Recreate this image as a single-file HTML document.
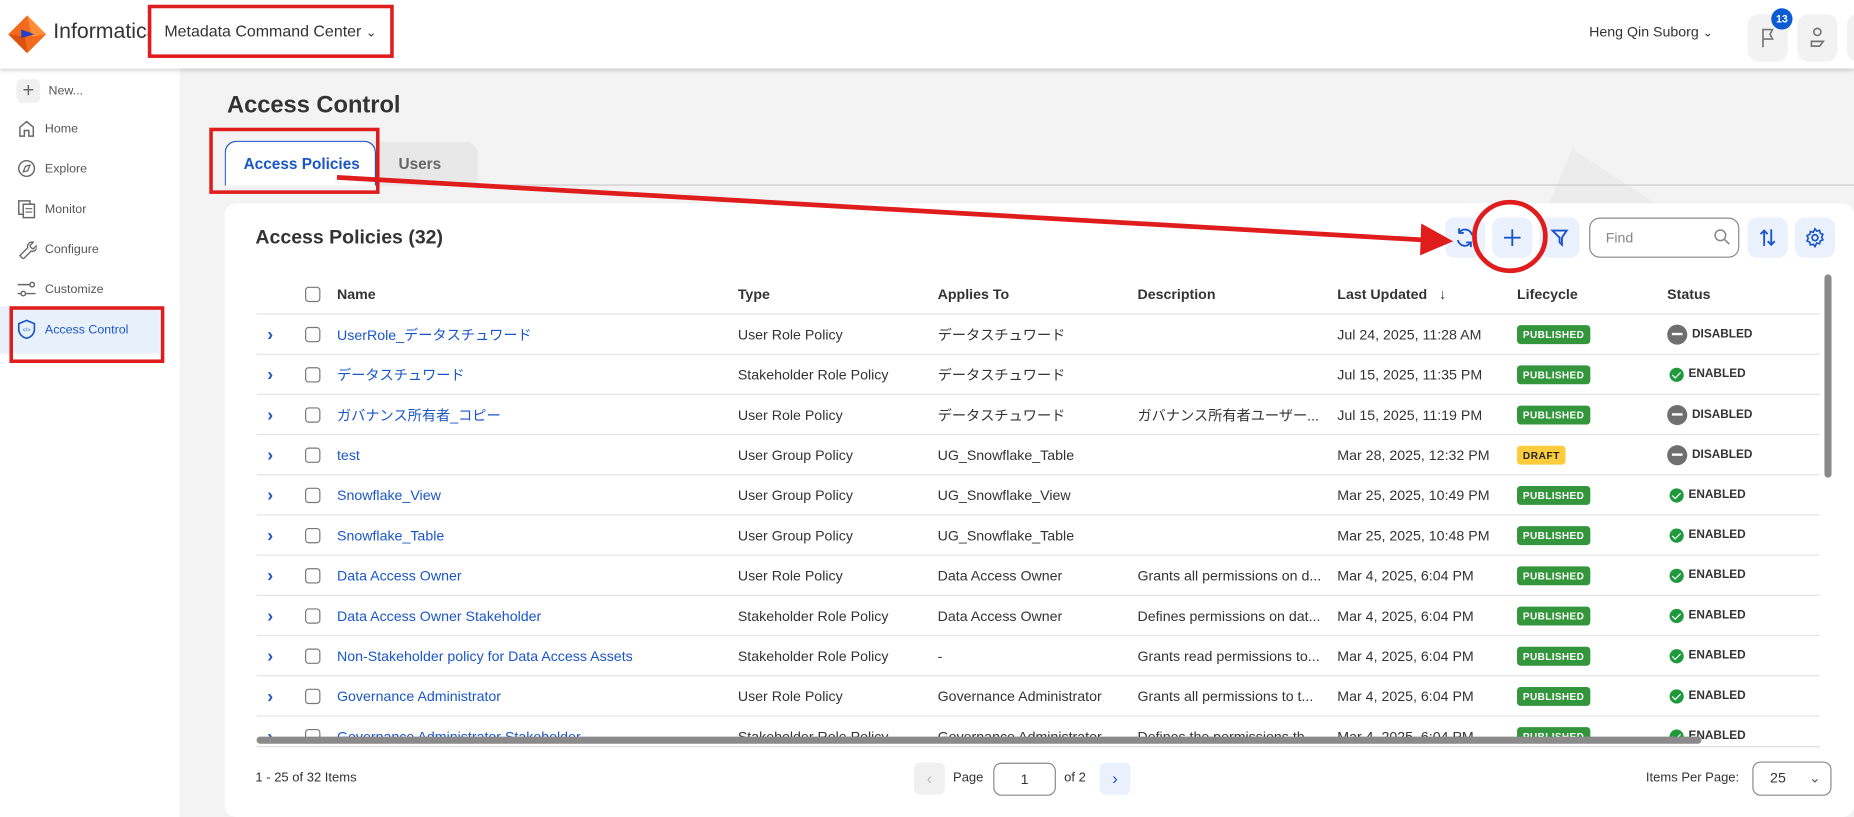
<!DOCTYPE html>
<html><head><meta charset="utf-8"><style>
*{box-sizing:border-box;margin:0;padding:0}
html,body{width:1854px;height:817px;overflow:hidden;background:#f3f3f3}
#w{width:1568px;height:691px;transform:scale(1.18240);transform-origin:0 0;position:relative;font-family:"Liberation Sans","Noto Sans CJK JP",sans-serif;color:#333;background:#f3f3f3}
.a{position:absolute}
.hdr{left:0;top:0;width:1568px;height:58px;background:#fff;box-shadow:0 2px 3px rgba(0,0,0,.15);z-index:2}
.side{left:0;top:58px;width:152px;height:633px;background:#fff}
.nav{position:absolute;left:14px;font-size:10.5px;color:#555;display:flex;align-items:center;gap:7px}
.nav svg{width:17px;height:17px}
.btn{position:absolute;width:34px;height:34px;border-radius:8px;background:#eaf1fd;display:flex;align-items:center;justify-content:center}
.card{left:190px;top:172px;width:1378px;height:519px;background:#fff;border-radius:10px}
.row{position:absolute;left:217px;width:1322px;height:34px;border-bottom:1px solid #e2e2e2;font-size:12px;color:#333}
.row span{position:absolute;top:50%;transform:translateY(-50%);white-space:nowrap}
.cb{width:13px;height:13px;border:1px solid #777;border-radius:3px}
.nm{color:#1a56c8}
.pub{background:#34963c;color:#fff;font-size:8.5px;font-weight:bold;padding:3px 5px;border-radius:3px;letter-spacing:.3px}
.dr{background:#fccc3c;color:#222;font-size:8.5px;font-weight:bold;padding:3px 5px;border-radius:3px;letter-spacing:.5px}
.st{font-size:10px;font-weight:bold;display:flex;align-items:center;gap:4px}
.dis{width:17px;height:17px;border-radius:50%;background:#6f6f6f;position:relative;display:inline-block}
.dis:after{content:"";position:absolute;left:4px;top:7.5px;width:9px;height:2px;background:#fff}
.en{width:12px;height:12px;border-radius:50%;background:#1e9a3c;display:inline-block;position:relative}
.en:after{content:"";position:absolute;left:3.5px;top:2px;width:3px;height:5.5px;border:solid #fff;border-width:0 1.6px 1.6px 0;transform:rotate(45deg)}
.red{position:absolute;border:3px solid #e01d1d;z-index:5}
</style></head><body><div id="w">
<div class="a hdr">
 <svg class="a" style="left:7px;top:13px" width="32" height="32" viewBox="0 0 32 32"><polygon points="16,0 32,16 16,32 0,16" fill="#f26b1d"/><polygon points="16,0 32,16 20,18" fill="#ff8c3a"/><polygon points="0,16 16,32 14,18" fill="#d9530f"/><polygon points="11,12 22,16 11,19" fill="#1f40c8"/></svg>
 <div class="a" style="left:45px;top:16px;font-size:18px;color:#333">Informatica</div>
 <div class="a" style="left:128px;top:7px;width:201px;height:38px;background:#fff"></div>
 <div class="a" style="left:139px;top:19px;font-size:13.5px;color:#333">Metadata Command Center <span style="font-size:11px">&#8964;</span></div>
 <div class="a" style="left:1344px;top:20px;font-size:12px;color:#333">Heng Qin Suborg <span style="font-size:10px">&#8964;</span></div>
 <div class="a" style="left:1478px;top:12px;width:34px;height:40px;border-radius:9px;background:#f2f2f2"></div>
 <svg class="a" style="left:1486px;top:22px" width="18" height="20" viewBox="0 0 18 20"><path d="M5 18V3h8l-2 4 2 4H5" fill="none" stroke="#777" stroke-width="1.4"/></svg>
 <div class="a" style="left:1498px;top:7px;width:18px;height:18px;border-radius:50%;background:#0b5bd3;color:#fff;font-size:9px;font-weight:bold;text-align:center;line-height:18px">13</div>
 <div class="a" style="left:1520px;top:12px;width:34px;height:40px;border-radius:9px;background:#f2f2f2"></div>
 <svg class="a" style="left:1528px;top:22px" width="18" height="20" viewBox="0 0 18 20"><circle cx="9" cy="5" r="3" fill="none" stroke="#777" stroke-width="1.4"/><path d="M4 17v-4h10l-3 4z" fill="none" stroke="#777" stroke-width="1.4"/></svg>
 <div class="a" style="left:1562px;top:12px;width:20px;height:40px;border-radius:9px;background:#f2f2f2"></div>
</div>
<div class="red" style="left:125px;top:4px;width:208px;height:45px"></div>
<div class="a side">
 <div class="a" style="left:0;top:201px;width:135px;height:40px;background:#e8f0fb"></div>
 <div class="nav" style="top:9px"><span style="width:20px;height:20px;background:#f0f0f0;border-radius:5px;display:inline-block;text-align:center;font-size:17px;line-height:19px;color:#666">+</span>New...</div>
 <div class="nav" style="top:42px"><svg viewBox="0 0 18 18"><path d="M3 16V8l6-5 6 5v8h-4v-5H7v5z" fill="none" stroke="#666" stroke-width="1.3"/></svg>Home</div>
 <div class="nav" style="top:76px"><svg viewBox="0 0 18 18"><circle cx="9" cy="9" r="7" fill="none" stroke="#666" stroke-width="1.3"/><path d="M6 12l2-5 4-1-2 5z" fill="none" stroke="#666" stroke-width="1.2"/></svg>Explore</div>
 <div class="nav" style="top:110px"><svg viewBox="0 0 18 18"><rect x="2" y="2" width="10" height="12" fill="none" stroke="#666" stroke-width="1.3"/><rect x="6" y="5" width="10" height="12" fill="#fff" stroke="#666" stroke-width="1.3"/><path d="M8 9h6M8 12h6" stroke="#666"/></svg>Monitor</div>
 <div class="nav" style="top:144px"><svg viewBox="0 0 18 18"><path d="M3 15l7-7a4 4 0 0 1 5-5l-3 3 1 2 2 1 3-3a4 4 0 0 1-5 5l-7 7z" fill="none" stroke="#666" stroke-width="1.2"/></svg>Configure</div>
 <div class="nav" style="top:178px"><svg viewBox="0 0 18 18"><path d="M1 5h11M1 13h3M8 13h9" stroke="#666" stroke-width="1.3"/><circle cx="14" cy="5" r="2" fill="none" stroke="#666" stroke-width="1.3"/><circle cx="6" cy="13" r="2" fill="none" stroke="#666" stroke-width="1.3"/></svg>Customize</div>
 <div class="nav" style="top:212px;color:#1a56c8"><svg viewBox="0 0 18 18"><path d="M9 1l7 3v5c0 4-3 7-7 8-4-1-7-4-7-8V4z" fill="none" stroke="#1a56c8" stroke-width="1.5"/><text x="9" y="11" font-size="5" text-anchor="middle" fill="#1a56c8">&lt;/&gt;</text></svg>Access Control</div>
</div>
<div class="red" style="left:8px;top:259px;width:131px;height:48px"></div>
<svg class="a" style="left:1280px;top:120px" width="150" height="60"><polygon points="50,6 120,52 30,52" fill="#ececec"/></svg>
<div class="a" style="left:192px;top:78px;font-size:20px;font-weight:bold;color:#333">Access Control</div>
<div class="a" style="left:190px;top:156px;width:1378px;height:1px;background:#ccc"></div>
<div class="a" style="left:300px;top:120px;width:104px;height:37px;background:#e8e8e8;border-radius:10px 10px 0 0"></div>
<div class="a" style="left:337px;top:131px;font-size:13px;font-weight:bold;color:#666">Users</div>
<div class="a" style="left:190px;top:119px;width:128px;height:38px;background:#fff;border:1px solid #1a56c8;border-bottom:none;border-radius:10px 10px 0 0"></div>
<div class="a" style="left:206px;top:131px;font-size:13px;font-weight:bold;color:#1a56c8">Access Policies</div>
<div class="red" style="left:177px;top:108px;width:144px;height:56px"></div>
<div class="a card"></div>
<div class="a" style="left:216px;top:192px;font-size:16.5px;font-weight:bold;color:#333">Access Policies (32)</div>
<div class="btn" style="left:1222px;top:184px"><svg width="18" height="18" viewBox="0 0 18 18"><path d="M15 7A6 6 0 0 0 4 5M3 11a6 6 0 0 0 11 2M4 1v4h4M14 17v-4h-4" fill="none" stroke="#1a56c8" stroke-width="1.6"/></svg></div>
<div class="btn" style="left:1262px;top:184px"><svg width="16" height="16"><path d="M8 1v14M1 8h14" stroke="#1a56c8" stroke-width="1.6"/></svg></div>
<div class="btn" style="left:1302px;top:184px"><svg width="16" height="16"><path d="M2 2h12l-4 6v6l-2-2V8z" fill="none" stroke="#1a56c8" stroke-width="1.6"/></svg></div>
<div class="a" style="left:1344px;top:184px;width:127px;height:34px;border:1px solid #888;border-radius:9px;background:#fff"></div>
<div class="a" style="left:1358px;top:194px;font-size:12px;color:#888">Find</div>
<svg class="a" style="left:1449px;top:193px" width="15" height="15"><circle cx="6" cy="6" r="4.5" fill="none" stroke="#888" stroke-width="1.3"/><path d="M9.5 9.5l4 4" stroke="#888" stroke-width="1.3"/></svg>
<div class="btn" style="left:1478px;top:184px"><svg width="16" height="16"><path d="M5 15V2M2 5l3-3 3 3M11 1v13M8 11l3 3 3-3" fill="none" stroke="#1a56c8" stroke-width="1.6"/></svg></div>
<div class="btn" style="left:1518px;top:184px"><svg width="18" height="18" viewBox="0 0 18 18"><circle cx="9" cy="9" r="2.5" fill="none" stroke="#1a56c8" stroke-width="1.5"/><path d="M9 1.5l1.5 2 2.4-.7.5 2.4 2.3 1-1 2.3 1 2.3-2.3 1-.5 2.4-2.4-.7L9 16.5l-1.5-2-2.4.7-.5-2.4-2.3-1 1-2.3-1-2.3 2.3-1 .5-2.4 2.4.7z" fill="none" stroke="#1a56c8" stroke-width="1.4"/></svg></div>
<svg class="a" style="left:0;top:0;z-index:6" width="1568" height="691"><line x1="285" y1="150" x2="1205" y2="203" stroke="#e01d1d" stroke-width="4"/><polygon points="1229,204 1202,189 1201,216" fill="#e01d1d"/><ellipse cx="1277" cy="200" rx="30" ry="29" fill="none" stroke="#e01d1d" stroke-width="4"/></svg>
<div class="row" style="top:232px;height:34px;font-weight:bold">
 <span class="cb" style="left:41px"></span><span style="left:68px">Name</span><span style="left:407px">Type</span><span style="left:576px">Applies To</span><span style="left:745px">Description</span><span style="left:914px">Last Updated &nbsp; <span style="position:static;font-weight:normal">&#8595;</span></span><span style="left:1066px">Lifecycle</span><span style="left:1193px">Status</span>
</div>
<div class="a" style="left:217px;top:266px;width:1322px;height:362px;overflow:hidden" id="tb"></div>
<div class="a" style="left:217px;top:623px;width:1222px;height:6px;border-radius:3px;background:#8a8a8a;z-index:3"></div>
<div class="a" style="left:217px;top:631px;width:1322px;height:1px;background:#ddd"></div>
<div class="a" style="left:1543px;top:232px;width:6px;height:172px;border-radius:3px;background:#8a8a8a"></div>
<div class="a" style="left:216px;top:652px;font-size:11px;color:#333">1 - 25 of 32 Items</div>
<div class="a" style="left:773px;top:645px;width:26px;height:27px;background:#f0f0f0;border-radius:5px;color:#bbb;text-align:center;line-height:27px;font-size:14px">&#8249;</div>
<div class="a" style="left:806px;top:652px;font-size:11px">Page</div>
<div class="a" style="left:840px;top:645px;width:53px;height:28px;border:1px solid #888;border-radius:7px;text-align:center;line-height:26px;font-size:12px">1</div>
<div class="a" style="left:900px;top:652px;font-size:11px">of 2</div>
<div class="a" style="left:930px;top:645px;width:26px;height:27px;background:#eaf1fd;border-radius:5px;color:#1a56c8;text-align:center;line-height:27px;font-size:14px">&#8250;</div>
<div class="a" style="left:1392px;top:652px;font-size:11px">Items Per Page:</div>
<div class="a" style="left:1482px;top:644px;width:67px;height:29px;border:1px solid #888;border-radius:7px;font-size:12px;line-height:27px;padding-left:14px">25<span style="position:absolute;right:8px;font-size:12px;color:#555">&#8964;</span></div>
<script>
var d=[["UserRole_データスチュワード","User Role Policy","データスチュワード","","Jul 24, 2025, 11:28 AM",1,0],
["データスチュワード","Stakeholder Role Policy","データスチュワード","","Jul 15, 2025, 11:35 PM",1,1],
["ガバナンス所有者_コピー","User Role Policy","データスチュワード","ガバナンス所有者ユーザー...","Jul 15, 2025, 11:19 PM",1,0],
["test","User Group Policy","UG_Snowflake_Table","","Mar 28, 2025, 12:32 PM",0,0],
["Snowflake_View","User Group Policy","UG_Snowflake_View","","Mar 25, 2025, 10:49 PM",1,1],
["Snowflake_Table","User Group Policy","UG_Snowflake_Table","","Mar 25, 2025, 10:48 PM",1,1],
["Data Access Owner","User Role Policy","Data Access Owner","Grants all permissions on d...","Mar 4, 2025, 6:04 PM",1,1],
["Data Access Owner Stakeholder","Stakeholder Role Policy","Data Access Owner","Defines permissions on dat...","Mar 4, 2025, 6:04 PM",1,1],
["Non-Stakeholder policy for Data Access Assets","Stakeholder Role Policy","-","Grants read permissions to...","Mar 4, 2025, 6:04 PM",1,1],
["Governance Administrator","User Role Policy","Governance Administrator","Grants all permissions to t...","Mar 4, 2025, 6:04 PM",1,1],
["Governance Administrator Stakeholder","Stakeholder Role Policy","Governance Administrator","Defines the permissions th...","Mar 4, 2025, 6:04 PM",1,1]];
var h="";d.forEach(function(r,i){h+='<div class="row" style="left:0;top:'+(i*34)+'px"><span style="left:9px;color:#1a56c8;font-size:15px;font-weight:bold">&#8250;</span><span class="cb" style="left:41px"></span><span class="nm" style="left:68px">'+r[0]+'</span><span style="left:407px">'+r[1]+'</span><span style="left:576px">'+r[2]+'</span><span style="left:745px">'+r[3]+'</span><span style="left:914px">'+r[4]+'</span><span style="left:1066px" class="'+(r[5]?'pub':'dr')+'">'+(r[5]?'PUBLISHED':'DRAFT')+'</span><span class="st" style="left:'+(r[6]?1195:1193)+'px">'+(r[6]?'<i class="en"></i>ENABLED':'<i class="dis"></i>DISABLED')+'</span></div>'});
document.getElementById("tb").innerHTML=h;
</script>
</div></body></html>
